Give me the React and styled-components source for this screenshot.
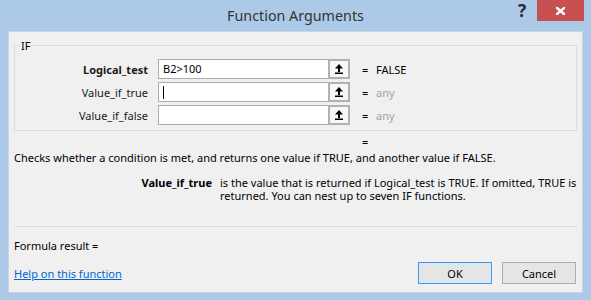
import React from 'react';
import styled, { createGlobalStyle } from 'styled-components';

const GlobalStyle = createGlobalStyle`
  html, body {
    margin: 0;
    padding: 0;
    background: #adc9e8;
  }
  body {
    font-family: "Noto Sans", "Open Sans", sans-serif;
    font-size: 11px;
    color: #000;
  }
`;

const Window = styled.div`
  width: 591px;
  height: 300px;
  background: #adc9e8;
  display: flex;
  flex-direction: column;
`;

const TitleBar = styled.div`
  height: 31px;
  flex: none;
  display: grid;
  grid-template-columns: 1fr auto 1fr;
`;

const Title = styled.div`
  grid-column: 2;
  font-size: 14.3px;
  line-height: 32px;
  color: #333;
`;

const Controls = styled.div`
  grid-column: 3;
  justify-self: end;
  align-self: start;
  display: flex;
  align-items: flex-start;
  margin-right: 7px;
`;

const HelpGlyph = styled.span`
  font-size: 17px;
  font-weight: 700;
  line-height: 21px;
  color: #2a2a2a;
  margin-right: 11px;
`;

const CloseButton = styled.div`
  width: 47px;
  height: 21px;
  background: #c75050;
  display: flex;
  align-items: center;
  justify-content: center;
`;

const Client = styled.div`
  flex: 1;
  min-height: 0;
  margin: 0 8px 7px 8px;
  box-sizing: border-box;
  background: #f0f0f0;
  border: 1px solid #c9d6e5;
  padding: 0 5px;
  display: flex;
  flex-direction: column;
`;

const Group = styled.fieldset`
  margin: 6px 0 0 0;
  padding: 6px 0 5px 0;
  border: 1px solid #dcdcdc;
  display: flex;
  flex-direction: column;
  gap: 3px;
`;

const Legend = styled.legend`
  margin-left: 5px;
  padding: 0 1px;
  line-height: 15px;
`;

const ArgRow = styled.div`
  display: grid;
  grid-template-columns: 133px 192px auto;
  column-gap: 10px;
  align-items: center;
  height: 20px;
`;

const ArgLabel = styled.div`
  text-align: right;
  font-weight: ${p => (p.$active ? 700 : 400)};
  color: #1a1a1a;
`;

const RefEdit = styled.div`
  display: flex;
  height: 20px;
`;

const Field = styled.div`
  flex: 1;
  box-sizing: border-box;
  background: #fff;
  border: 1px solid #abadb3;
  border-right: none;
  padding-left: 4px;
  line-height: 18px;
  display: flex;
  align-items: center;
`;

const Caret = styled.span`
  display: block;
  width: 1px;
  height: 13px;
  background: #000;
`;

const RefButton = styled.div`
  width: 22px;
  flex: none;
  box-sizing: border-box;
  border: 2px solid #b1b1b1;
  background: #f7f7f7;
  display: flex;
  align-items: center;
  justify-content: center;
`;

const Result = styled.div`
  display: flex;
  margin-left: 2px;
  color: ${p => (p.$muted ? '#a3a3a3' : '#000')};
`;

const Equals = styled.span`
  width: 14px;
  color: #000;
`;

const FormulaEquals = styled.div`
  margin: 3px 0 0 348px;
  line-height: 15px;
`;

const Description = styled.div`
  margin-top: 1px;
  line-height: 15px;
`;

const ArgHelp = styled.div`
  display: grid;
  grid-template-columns: 198px 1fr;
  column-gap: 8px;
  margin-top: 11px;
  line-height: 13px;
`;

const ArgHelpName = styled.div`
  text-align: right;
  font-weight: 700;
`;

const Separator = styled.div`
  height: 1px;
  background: #dcdcdc;
  margin-top: 24px;
`;

const FormulaResult = styled.div`
  margin-top: 11px;
  line-height: 15px;
`;

const Footer = styled.div`
  margin-top: 9px;
  display: flex;
  align-items: center;
  gap: 10px;
  padding-right: 1px;
`;

const HelpLink = styled.a`
  flex: 1;
  color: #0066cc;
  text-decoration: underline;
  cursor: pointer;
`;

const Button = styled.button`
  width: 74px;
  height: 22px;
  box-sizing: border-box;
  font-family: inherit;
  font-size: 11px;
  color: #000;
  background: #e5e5e5;
  border: 1px solid ${p => (p.$default ? '#3399ff' : '#adadad')};
  padding: 0;
`;

const UpArrow = () => (
  <svg width="8" height="10" viewBox="0 0 8 10">
    <polygon points="4,0 8,4.5 0,4.5" fill="#000" />
    <rect x="3" y="4" width="2" height="4" fill="#000" />
    <rect x="0" y="8.5" width="8" height="1.5" fill="#000" />
  </svg>
);

const CloseX = () => (
  <svg width="9" height="8" viewBox="0 0 9 8">
    <path d="M1 1 L8 7 M8 1 L1 7" stroke="#fff" strokeWidth="2.4" strokeLinecap="square" />
  </svg>
);

const args = [
  { name: 'Logical_test', value: 'B2>100', result: 'FALSE', active: true },
  { name: 'Value_if_true', value: '', result: 'any', caret: true },
  { name: 'Value_if_false', value: '', result: 'any' },
];

export default function App() {
  return (
    <>
      <GlobalStyle />
      <Window>
        <TitleBar>
          <Title>Function Arguments</Title>
          <Controls>
            <HelpGlyph>?</HelpGlyph>
            <CloseButton>
              <CloseX />
            </CloseButton>
          </Controls>
        </TitleBar>
        <Client>
          <Group>
            <Legend>IF</Legend>
            {args.map(a => (
              <ArgRow key={a.name}>
                <ArgLabel $active={a.active}>{a.name}</ArgLabel>
                <RefEdit>
                  <Field>{a.caret ? <Caret /> : a.value}</Field>
                  <RefButton>
                    <UpArrow />
                  </RefButton>
                </RefEdit>
                <Result $muted={a.result === 'any'}>
                  <Equals>=</Equals>
                  {a.result}
                </Result>
              </ArgRow>
            ))}
          </Group>
          <FormulaEquals>=</FormulaEquals>
          <Description>
            Checks whether a condition is met, and returns one value if TRUE, and another value if FALSE.
          </Description>
          <ArgHelp>
            <ArgHelpName>Value_if_true</ArgHelpName>
            <div>
              is the value that is returned if Logical_test is TRUE. If omitted, TRUE is
              <br />
              returned. You can nest up to seven IF functions.
            </div>
          </ArgHelp>
          <Separator />
          <FormulaResult>Formula result =</FormulaResult>
          <Footer>
            <HelpLink>Help on this function</HelpLink>
            <Button $default>OK</Button>
            <Button>Cancel</Button>
          </Footer>
        </Client>
      </Window>
    </>
  );
}
